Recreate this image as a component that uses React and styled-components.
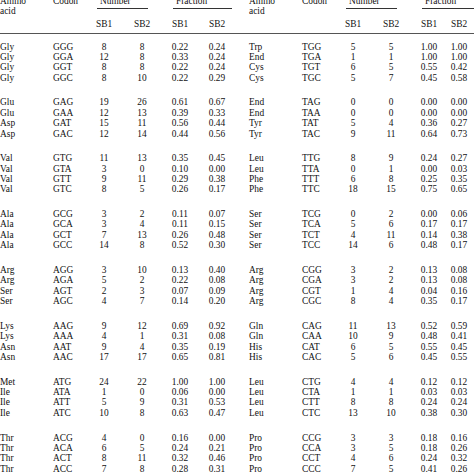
import React from 'react'
import styled, { createGlobalStyle } from 'styled-components'

const Global = createGlobalStyle`
  html, body { margin: 0; padding: 0; background: #fff; overflow: hidden; }
  body { width: 474px; height: 474px; }
`

const Page = styled.div`
  display: flex;
  width: 474px;
  height: 474px;
  overflow: hidden;
  font-family: "Liberation Serif", "Times New Roman", serif;
  font-size: 9.4px;
  line-height: 10.4px;
  color: #111;
`

const Half = styled.div`
  flex: 0 0 249px;
  margin-top: -4px;
`

const Head = styled.div`
  display: grid;
  grid-template-columns: ${p => p.$cols};
  grid-template-rows: auto auto;
  row-gap: 2px;
  padding-bottom: 3.5px;
  border-bottom: 1.6px solid #555;
`

const HeadLabel = styled.div`
  grid-row: 1;
  white-space: pre-line;
`

const Spanner = styled.div`
  grid-row: 1;
  grid-column: ${p => p.$col};
  margin: 0 ${p => p.$right}px 0 ${p => p.$left}px;
  padding: 0 0 6px 3px;
  border-bottom: 1px solid #333;
  height: 6.2px;
  overflow: visible;
`

const SubLabel = styled.div`
  grid-row: 2;
  grid-column: ${p => p.$col};
  text-align: center;
`

const Group = styled.div`
  margin-top: ${p => (p.$first ? 7.8 : 14.3)}px;
`

const Row = styled.div`
  display: grid;
  grid-template-columns: ${p => p.$cols};
  height: 10.4px;
`

const Cell = styled.div`
  text-align: ${p => (p.$num ? 'center' : 'left')};
  white-space: nowrap;
`

const left = [
  [['Gly', 'GGG', 8, 8, '0.22', '0.24'], ['Gly', 'GGA', 12, 8, '0.33', '0.24'], ['Gly', 'GGT', 8, 8, '0.22', '0.24'], ['Gly', 'GGC', 8, 10, '0.22', '0.29']],
  [['Glu', 'GAG', 19, 26, '0.61', '0.67'], ['Glu', 'GAA', 12, 13, '0.39', '0.33'], ['Asp', 'GAT', 15, 11, '0.56', '0.44'], ['Asp', 'GAC', 12, 14, '0.44', '0.56']],
  [['Val', 'GTG', 11, 13, '0.35', '0.45'], ['Val', 'GTA', 3, 0, '0.10', '0.00'], ['Val', 'GTT', 9, 11, '0.29', '0.38'], ['Val', 'GTC', 8, 5, '0.26', '0.17']],
  [['Ala', 'GCG', 3, 2, '0.11', '0.07'], ['Ala', 'GCA', 3, 4, '0.11', '0.15'], ['Ala', 'GCT', 7, 13, '0.26', '0.48'], ['Ala', 'GCC', 14, 8, '0.52', '0.30']],
  [['Arg', 'AGG', 3, 10, '0.13', '0.40'], ['Arg', 'AGA', 5, 2, '0.22', '0.08'], ['Ser', 'AGT', 2, 3, '0.07', '0.09'], ['Ser', 'AGC', 4, 7, '0.14', '0.20']],
  [['Lys', 'AAG', 9, 12, '0.69', '0.92'], ['Lys', 'AAA', 4, 1, '0.31', '0.08'], ['Asn', 'AAT', 9, 4, '0.35', '0.19'], ['Asn', 'AAC', 17, 17, '0.65', '0.81']],
  [['Met', 'ATG', 24, 22, '1.00', '1.00'], ['Ile', 'ATA', 1, 0, '0.06', '0.00'], ['Ile', 'ATT', 5, 9, '0.31', '0.53'], ['Ile', 'ATC', 10, 8, '0.63', '0.47']],
  [['Thr', 'ACG', 4, 0, '0.16', '0.00'], ['Thr', 'ACA', 6, 5, '0.24', '0.21'], ['Thr', 'ACT', 8, 11, '0.32', '0.46'], ['Thr', 'ACC', 7, 8, '0.28', '0.31']],
]

const right = [
  [['Trp', 'TGG', 5, 5, '1.00', '1.00'], ['End', 'TGA', 1, 1, '1.00', '1.00'], ['Cys', 'TGT', 6, 5, '0.55', '0.42'], ['Cys', 'TGC', 5, 7, '0.45', '0.58']],
  [['End', 'TAG', 0, 0, '0.00', '0.00'], ['End', 'TAA', 0, 0, '0.00', '0.00'], ['Tyr', 'TAT', 5, 4, '0.36', '0.27'], ['Tyr', 'TAC', 9, 11, '0.64', '0.73']],
  [['Leu', 'TTG', 8, 9, '0.24', '0.27'], ['Leu', 'TTA', 0, 1, '0.00', '0.03'], ['Phe', 'TTT', 6, 8, '0.25', '0.35'], ['Phe', 'TTC', 18, 15, '0.75', '0.65']],
  [['Ser', 'TCG', 0, 2, '0.00', '0.06'], ['Ser', 'TCA', 5, 6, '0.17', '0.17'], ['Ser', 'TCT', 4, 11, '0.14', '0.38'], ['Ser', 'TCC', 14, 6, '0.48', '0.17']],
  [['Arg', 'CGG', 3, 2, '0.13', '0.08'], ['Arg', 'CGA', 3, 2, '0.13', '0.08'], ['Arg', 'CGT', 1, 4, '0.04', '0.16'], ['Arg', 'CGC', 8, 4, '0.35', '0.17']],
  [['Gln', 'CAG', 11, 13, '0.52', '0.59'], ['Gln', 'CAA', 10, 9, '0.48', '0.41'], ['His', 'CAT', 6, 5, '0.55', '0.45'], ['His', 'CAC', 5, 6, '0.45', '0.55']],
  [['Leu', 'CTG', 4, 4, '0.12', '0.12'], ['Leu', 'CTA', 1, 1, '0.03', '0.03'], ['Leu', 'CTT', 8, 8, '0.24', '0.24'], ['Leu', 'CTC', 13, 10, '0.38', '0.30']],
  [['Pro', 'CCG', 3, 3, '0.18', '0.16'], ['Pro', 'CCA', 3, 5, '0.18', '0.26'], ['Pro', 'CCT', 4, 6, '0.24', '0.32'], ['Pro', 'CCC', 7, 5, '0.41', '0.26']],
]

// amino | codon | number sb1 | number sb2 | fraction sb1 | fraction sb2 | rest
const colsLeft = '53px 35px 32px 44px 32px 42px 11px'
const colsRight = '53px 35px 32px 44px 32px 28px 25px'

function TableHalf({ groups, cols, fracRight }) {
  return (
    <Half>
      <Head $cols={cols}>
        <HeadLabel>{'Amino\nacid'}</HeadLabel>
        <HeadLabel>Codon</HeadLabel>
        <Spanner $col="3 / 5" $left={9} $right={16}>Number</Spanner>
        <Spanner $col="5 / 7" $left={9} $right={fracRight}>Fraction</Spanner>
        <SubLabel $col={3}>SB1</SubLabel>
        <SubLabel $col={4}>SB2</SubLabel>
        <SubLabel $col={5}>SB1</SubLabel>
        <SubLabel $col={6}>SB2</SubLabel>
      </Head>
      {groups.map((rows, i) => (
        <Group key={i} $first={i === 0}>
          {rows.map((r, j) => (
            <Row key={j} $cols={cols}>
              <Cell>{r[0]}</Cell>
              <Cell>{r[1]}</Cell>
              <Cell $num>{r[2]}</Cell>
              <Cell $num>{r[3]}</Cell>
              <Cell $num>{r[4]}</Cell>
              <Cell $num>{r[5]}</Cell>
            </Row>
          ))}
        </Group>
      ))}
    </Half>
  )
}

export default function App() {
  return (
    <>
      <Global />
      <Page>
        <TableHalf groups={left} cols={colsLeft} fracRight={6} />
        <TableHalf groups={right} cols={colsRight} fracRight={-20} />
      </Page>
    </>
  )
}
